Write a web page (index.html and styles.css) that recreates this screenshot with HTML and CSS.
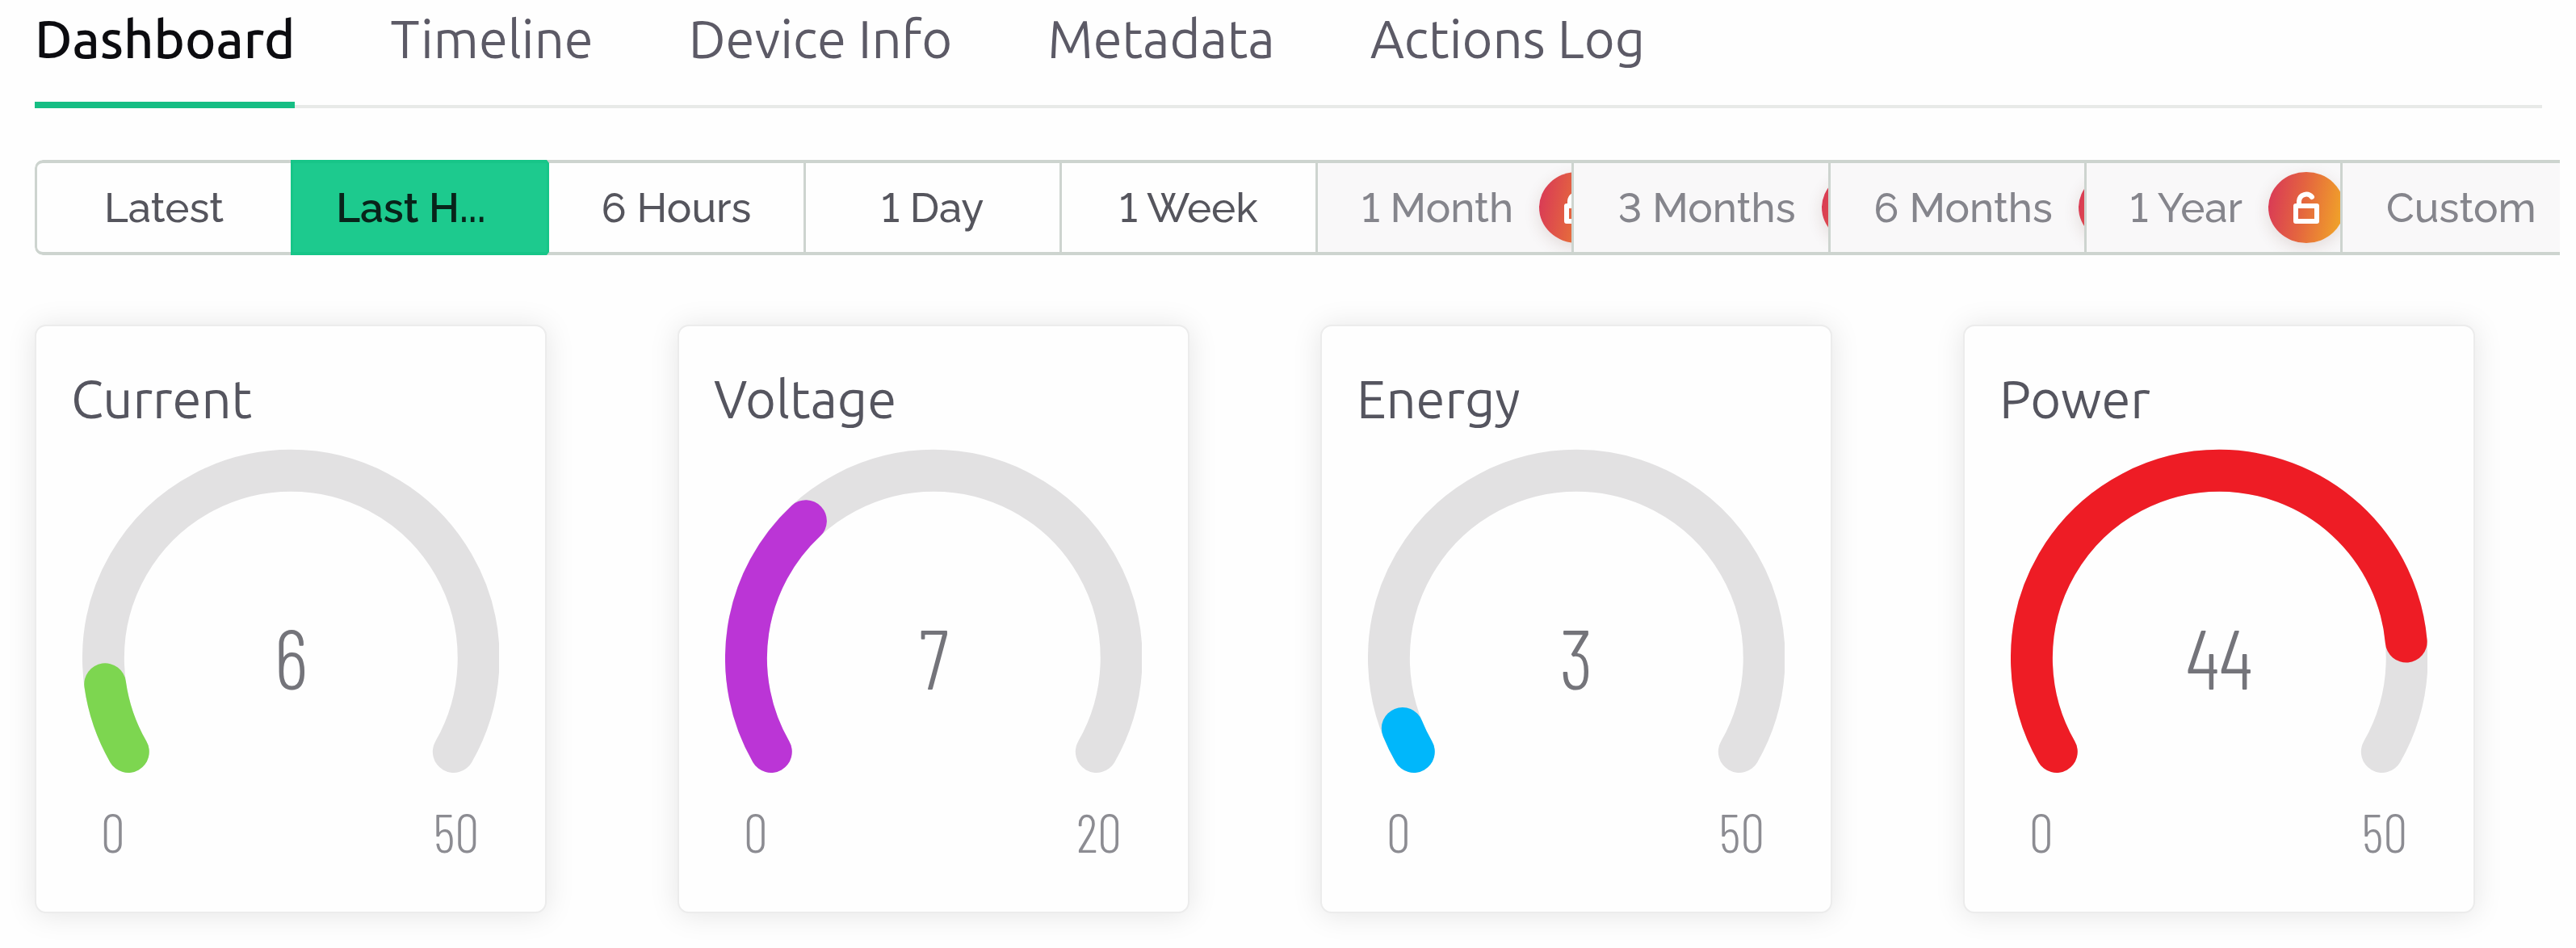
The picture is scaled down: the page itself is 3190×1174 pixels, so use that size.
FILE: index.html
```html
<!DOCTYPE html>
<html lang="en">
<head>
<meta charset="utf-8">
<title>Device Dashboard</title>
<link rel="stylesheet" href="styles.css">
</head>
<body>
<svg class="symbols" aria-hidden="true">
  <symbol id="lock" viewBox="0 0 34 42">
    <path d="M4 19h26v19H4z" fill="none" stroke="#fff" stroke-width="6" stroke-linejoin="round"/>
    <path d="M8 19v-6a9 9 0 0 1 16-5" fill="none" stroke="#fff" stroke-width="6" stroke-linecap="round"/>
  </symbol>
</svg>

<nav class="tabs">
  <a class="tab tab-active" href="#dashboard">Dashboard</a>
  <a class="tab" href="#timeline">Timeline</a>
  <a class="tab" href="#info">Device Info</a>
  <a class="tab" href="#metadata">Metadata</a>
  <a class="tab" href="#log">Actions Log</a>
</nav>

<div class="ranges">
  <button class="range" type="button">Latest</button>
  <button class="range range-active" type="button">Last H...</button>
  <button class="range" type="button">6 Hours</button>
  <button class="range" type="button">1 Day</button>
  <button class="range" type="button">1 Week</button>
  <button class="range range-locked" type="button">1 Month<span class="badge"><svg class="lock"><use href="#lock"/></svg></span></button>
  <button class="range range-locked" type="button">3 Months<span class="badge"><svg class="lock"><use href="#lock"/></svg></span></button>
  <button class="range range-locked" type="button">6 Months<span class="badge"><svg class="lock"><use href="#lock"/></svg></span></button>
  <button class="range range-locked" type="button">1 Year<span class="badge"><svg class="lock"><use href="#lock"/></svg></span></button>
  <button class="range range-locked" type="button">Custom</button>
</div>

<main class="cards">
  <section class="card">
    <h2 class="card-title">Current</h2>
    <svg class="gauge" viewBox="0 0 518 402">
      <path class="track" pathLength="240" d="M57 376A233 233 0 1 1 461 376"/>
      <path class="fill green" pathLength="240" stroke-dasharray="22 480" d="M57 376A233 233 0 1 1 461 376"/>
      <text class="value" x="259" y="299">6</text>
    </svg>
    <div class="scale"><span>0</span><span>50</span></div>
  </section>
  <section class="card">
    <h2 class="card-title">Voltage</h2>
    <svg class="gauge" viewBox="0 0 518 402">
      <path class="track" pathLength="240" d="M57 376A233 233 0 1 1 461 376"/>
      <path class="fill purple" pathLength="240" stroke-dasharray="77 480" d="M57 376A233 233 0 1 1 461 376"/>
      <text class="value" x="259" y="299">7</text>
    </svg>
    <div class="scale"><span>0</span><span>20</span></div>
  </section>
  <section class="card">
    <h2 class="card-title">Energy</h2>
    <svg class="gauge" viewBox="0 0 518 402">
      <path class="track" pathLength="240" d="M57 376A233 233 0 1 1 461 376"/>
      <path class="fill blue" pathLength="240" stroke-dasharray="8 480" d="M57 376A233 233 0 1 1 461 376"/>
      <text class="value" x="259" y="299">3</text>
    </svg>
    <div class="scale"><span>0</span><span>50</span></div>
  </section>
  <section class="card">
    <h2 class="card-title">Power</h2>
    <svg class="gauge" viewBox="0 0 518 402">
      <path class="track" pathLength="240" d="M57 376A233 233 0 1 1 461 376"/>
      <path class="fill red" pathLength="240" stroke-dasharray="205 480" d="M57 376A233 233 0 1 1 461 376"/>
      <text class="value" x="259" y="299">44</text>
    </svg>
    <div class="scale"><span>0</span><span>50</span></div>
  </section>
</main>
</body>
</html>
```
FILE: styles.css
```css
* {
  box-sizing: border-box;
}

body {
  margin: 0;
  padding: 0 0 44px 43px;
  background: #fefefe;
  color: #55555f;
  font-family: Ubuntu, "Noto Sans", sans-serif;
}

.symbols {
  display: none;
}

/* Tabs */
.tabs {
  display: flex;
  gap: 118px;
  margin-right: 42px;
  box-shadow: inset 0 -4px #e8eae8;
}

.tab {
  padding: 10px 0 40px;
  border-bottom: 8px solid transparent;
  color: #5c5a66;
  font-size: 65px;
  line-height: 76px;
  text-decoration: none;
  white-space: nowrap;
}

.tab-active {
  border-bottom-color: #16be84;
  color: #0c0c10;
  font-weight: 500;
}

/* Time range selector */
.ranges {
  display: grid;
  grid-template-columns: repeat(9, 7fr) 6fr;
  margin: 64px 20px 0 0;
  border-radius: 10px 0 0 10px;
  overflow: hidden;
}

.range {
  min-width: 0;
  height: 118px;
  padding: 0;
  border: solid #cdd4cf;
  border-width: 4px 0 4px 3px;
  background: #fefefe;
  color: #55555d;
  font: 500 51px/60px Raleway, Lato, sans-serif;
  font-variant-numeric: lining-nums;
  white-space: nowrap;
  overflow: hidden;
}

.range:first-child {
  border-radius: 10px 0 0 10px;
}

.range-active {
  padding-left: 53px;
  border-color: #17c588;
  background: #1dca8e;
  color: #08231a;
  font-weight: 600;
  text-align: left;
}

.range-active + .range {
  border-left-color: #17c588;
}

.range-locked {
  display: flex;
  align-items: center;
  gap: 32px;
  padding-left: 54px;
  background: #f9f8f9;
  color: #85858c;
}

.badge {
  display: grid;
  flex: none;
  place-items: center;
  width: 94px;
  height: 88px;
  border-radius: 50%;
  background: linear-gradient(100deg, #d93a56 5%, #e4653f 45%, #f0a02a 90%);
  box-shadow: 0 6px 20px rgba(90, 40, 30, 0.14);
}

.lock {
  width: 34px;
  height: 42px;
}

/* Gauge cards */
.cards {
  display: grid;
  grid-template-columns: repeat(4, 1fr);
  gap: 162px;
  margin: 86px 125px 0 0;
}

.card {
  padding: 52px 0 66px;
  border: 2px solid #ececec;
  border-radius: 14px;
  background: #fefefe;
  box-shadow: 0 2px 36px rgba(0, 0, 0, 0.1);
}

.card-title {
  margin: 0 43px;
  color: #55555f;
  font-size: 65px;
  font-weight: 400;
  line-height: 76px;
}

.gauge {
  display: block;
  width: 82%;
  margin: 24px auto 38px;
}

.track,
.fill {
  fill: none;
  stroke: #e2e1e2;
  stroke-width: 52px;
  stroke-linecap: round;
}

.green {
  stroke: #7dd650;
}

.purple {
  stroke: #bb35d6;
}

.blue {
  stroke: #00b7fb;
}

.red {
  stroke: #ee1c25;
}

.value,
.scale {
  font-family: "Barlow Condensed", "Roboto Condensed", Roboto, sans-serif;
  font-weight: 300;
}

.value {
  fill: #74747a;
  font-size: 104px;
  text-anchor: middle;
}

.scale {
  display: flex;
  justify-content: space-between;
  margin: 0 82px 0 80px;
  color: #8c8c92;
  font-size: 67px;
  line-height: 68px;
}
```
